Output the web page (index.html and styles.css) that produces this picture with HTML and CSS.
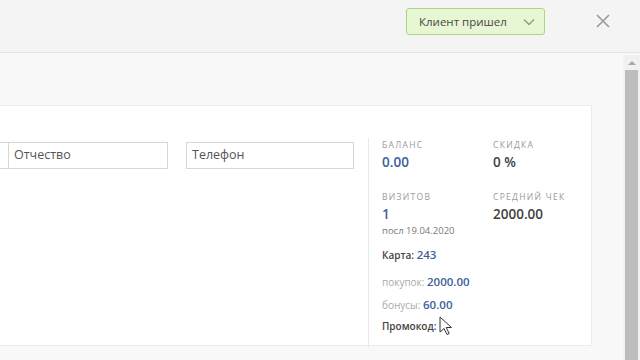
FILE: index.html
```html
<!DOCTYPE html>
<html lang="ru">
<head>
    <meta charset="UTF-8">
    <meta name="viewport" content="width=device-width, initial-scale=1.0">
    <title>Карточка клиента</title>
    <link rel="stylesheet" href="styles.css">
</head>
<body>
    <div class="header">
        <button class="status-btn">
            <span>Клиент пришел</span>
            <svg class="chevron" width="12" height="8" viewBox="0 0 12 8"><path d="M1 1.5l5 5 5-5" fill="none" stroke="#8a9a84" stroke-width="1.3"/></svg>
        </button>
        <svg class="close" width="16" height="16" viewBox="0 0 16 16"><path d="M2 2l12 12M14 2L2 14" stroke="#9a9a9a" stroke-width="1.6"/></svg>
    </div>

    <div class="main">
        <div class="content">
            <div class="card">
                <div class="form">
                    <div class="input-group">
                        <div class="input stub"></div>
                        <div class="input mid">Отчество</div>
                    </div>
                    <div class="input phone">Телефон</div>
                </div>

                <div class="stats">
                    <div class="stat-row">
                        <div class="stat">
                            <div class="label">Баланс</div>
                            <div class="value blue">0.00</div>
                        </div>
                        <div class="stat">
                            <div class="label">Скидка</div>
                            <div class="value">0 %</div>
                        </div>
                    </div>
                    <div class="stat-row">
                        <div class="stat">
                            <div class="label">Визитов</div>
                            <div class="value blue">1</div>
                            <div class="note">посл 19.04.2020</div>
                        </div>
                        <div class="stat">
                            <div class="label">Средний чек</div>
                            <div class="value">2000.00</div>
                        </div>
                    </div>
                    <div class="line card-no">Карта: <span class="blue">243</span></div>
                    <div class="line muted buys">покупок: <span class="blue">2000.00</span></div>
                    <div class="line muted bonus">бонусы: <span class="blue">60.00</span></div>
                    <div class="line promo">Промокод:</div>

                    <svg class="cursor" width="14" height="20" viewBox="0 0 14 20"><path d="M1 1v15l4-3.5 3 6 2.2-1-3-6h5.3z" fill="#fff" stroke="#333" stroke-width="1"/></svg>
                </div>
            </div>
        </div>
        <div class="scrollbar">
            <div class="arrow"></div>
            <div class="thumb"></div>
        </div>
    </div>
</body>
</html>
```

FILE: styles.css
```css
body {
    margin: 0;
    font-family: 'Open Sans', 'Liberation Sans', sans-serif;
    color: #444;
    background: #f8f8f8;
    height: 360px;
    overflow: hidden;
}

.header {
    height: 52px;
    background: #f4f4f4;
    border-bottom: 1px solid #e4e4e4;
    display: flex;
    align-items: flex-start;
    justify-content: flex-end;
    padding-right: 29px;
}

.status-btn {
    margin-top: 8px;
    width: 139px;
    height: 27px;
    display: flex;
    align-items: center;
    justify-content: space-between;
    padding: 0 9px 0 12px;
    background: #e7f6d3;
    border: 1px solid #a9d884;
    border-radius: 3px;
    font-family: inherit;
    font-size: 11.5px;
    color: #474747;
    box-sizing: border-box;
}

.close {
    margin: 13px 0 0 50px;
}

.main {
    display: flex;
    height: 307px;
}

.content {
    flex: 1;
    min-width: 0;
    padding-top: 52px;
    padding-right: 31px;
}

.card {
    height: 241px;
    background: #fff;
    border: 1px solid #ececec;
    border-left: none;
    display: flex;
    box-sizing: border-box;
}

.form {
    width: 369px;
    flex: none;
    display: flex;
    align-items: flex-start;
    gap: 18px;
    border-right: 1px solid #e8e8e8;
    height: 209px;
    margin-top: 32px;
    padding-top: 4px;
    box-sizing: border-box;
}

.input-group {
    display: flex;
}

.input {
    height: 27px;
    border: 1px solid #d6d6d6;
    box-sizing: border-box;
    font-size: 12.5px;
    color: #555;
    padding: 3px 0 0 5px;
    background: #fff;
}

.stub {
    width: 9px;
    border-left: none;
    padding: 0;
}

.mid {
    width: 159px;
    border-left: none;
}

.phone {
    width: 168px;
}

.stats {
    position: relative;
    flex: 1;
    min-width: 0;
    padding: 33px 0 0 13px;
}

.stat-row {
    display: flex;
    margin-bottom: 20px;
}

.stat {
    width: 111px;
    flex: none;
}

.stat + .stat {
    width: auto;
    flex: 1;
}

.label {
    font-size: 8.5px;
    letter-spacing: 1.3px;
    text-transform: uppercase;
    color: #9a9a9a;
    line-height: 12px;
    white-space: nowrap;
}

.value {
    margin-top: 2px;
    font-size: 13.5px;
    font-weight: 600;
    color: #3f3f3f;
    line-height: 18px;
}

.blue {
    color: #3b5f9c;
}

.note {
    margin-top: 1px;
    font-size: 9.5px;
    color: #7a7a7a;
    line-height: 14px;
}

.line {
    font-size: 10px;
    font-weight: 600;
    color: #444;
    line-height: 14px;
}

.line .blue {
    font-size: 11.5px;
}

.stat-row + .stat-row {
    margin-bottom: 10px;
}

.card-no {
    margin-bottom: 13px;
}

.muted {
    color: #aaa;
    font-weight: 400;
}

.muted .blue {
    font-weight: 600;
}

.buys {
    margin-bottom: 9px;
}

.bonus {
    margin-bottom: 7px;
}

.cursor {
    position: absolute;
    left: 70px;
    top: 210px;
}

.scrollbar {
    width: 17px;
    flex: none;
    margin-top: 2px;
    background: #f1f1f1;
    display: flex;
    flex-direction: column;
    align-items: center;
}

.arrow {
    margin-top: 6px;
    width: 0;
    height: 0;
    border-left: 4px solid transparent;
    border-right: 4px solid transparent;
    border-bottom: 4px solid #a8a8a8;
}

.thumb {
    margin-top: 5px;
    width: 13px;
    flex: 1;
    background: #bdbdbd;
}
```
